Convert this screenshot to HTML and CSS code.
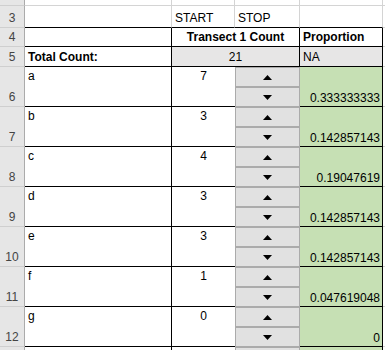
FILE: index.html
```html
<!DOCTYPE html>
<html lang="en">
<head>
    <meta charset="UTF-8">
    <meta name="viewport" content="width=device-width, initial-scale=1.0">
    <title>Transect Count</title>
    <link rel="stylesheet" href="styles.css">
</head>
<body>

    <div class="sheet">
        <!-- row 2 (cut at the top) -->
        <div class="cell rh">2</div>
        <div class="cell"></div>
        <div class="cell"></div>
        <div class="cell"></div>
        <div class="cell"></div>
        <div class="cell"></div>

        <!-- row 3 -->
        <div class="cell rh">3</div>
        <div class="cell line-b"></div>
        <div class="cell line-b">START</div>
        <div class="cell line-b">STOP</div>
        <div class="cell line-b"></div>
        <div class="cell"></div>

        <!-- row 4 -->
        <div class="cell rh">4</div>
        <div class="cell box"></div>
        <div class="cell box bold center span2">Transect 1 Count</div>
        <div class="cell box bold">Proportion</div>
        <div class="cell"></div>

        <!-- row 5 -->
        <div class="cell rh">5</div>
        <div class="cell box bold">Total Count:</div>
        <div class="cell box grey center span2">21</div>
        <div class="cell box grey">NA</div>
        <div class="cell"></div>

        <!-- species rows -->
        <div class="cell rh">6</div>
        <div class="cell box top">a</div>
        <div class="cell box count">7</div>
        <div class="cell spin"><div class="spin-btn"><svg width="9" height="5"><polygon points="0,5 4.5,0 9,5"/></svg></div><div class="spin-btn"><svg width="9" height="5"><polygon points="0,0 9,0 4.5,5"/></svg></div></div>
        <div class="cell box prop">0.333333333</div>
        <div class="cell"></div>

        <div class="cell rh">7</div>
        <div class="cell box top">b</div>
        <div class="cell box count">3</div>
        <div class="cell spin"><div class="spin-btn"><svg width="9" height="5"><polygon points="0,5 4.5,0 9,5"/></svg></div><div class="spin-btn"><svg width="9" height="5"><polygon points="0,0 9,0 4.5,5"/></svg></div></div>
        <div class="cell box prop">0.142857143</div>
        <div class="cell"></div>

        <div class="cell rh">8</div>
        <div class="cell box top">c</div>
        <div class="cell box count">4</div>
        <div class="cell spin"><div class="spin-btn"><svg width="9" height="5"><polygon points="0,5 4.5,0 9,5"/></svg></div><div class="spin-btn"><svg width="9" height="5"><polygon points="0,0 9,0 4.5,5"/></svg></div></div>
        <div class="cell box prop">0.19047619</div>
        <div class="cell"></div>

        <div class="cell rh">9</div>
        <div class="cell box top">d</div>
        <div class="cell box count">3</div>
        <div class="cell spin"><div class="spin-btn"><svg width="9" height="5"><polygon points="0,5 4.5,0 9,5"/></svg></div><div class="spin-btn"><svg width="9" height="5"><polygon points="0,0 9,0 4.5,5"/></svg></div></div>
        <div class="cell box prop">0.142857143</div>
        <div class="cell"></div>

        <div class="cell rh">10</div>
        <div class="cell box top">e</div>
        <div class="cell box count">3</div>
        <div class="cell spin"><div class="spin-btn"><svg width="9" height="5"><polygon points="0,5 4.5,0 9,5"/></svg></div><div class="spin-btn"><svg width="9" height="5"><polygon points="0,0 9,0 4.5,5"/></svg></div></div>
        <div class="cell box prop">0.142857143</div>
        <div class="cell"></div>

        <div class="cell rh">11</div>
        <div class="cell box top">f</div>
        <div class="cell box count">1</div>
        <div class="cell spin"><div class="spin-btn"><svg width="9" height="5"><polygon points="0,5 4.5,0 9,5"/></svg></div><div class="spin-btn"><svg width="9" height="5"><polygon points="0,0 9,0 4.5,5"/></svg></div></div>
        <div class="cell box prop">0.047619048</div>
        <div class="cell"></div>

        <div class="cell rh">12</div>
        <div class="cell box top">g</div>
        <div class="cell box count">0</div>
        <div class="cell spin"><div class="spin-btn"><svg width="9" height="5"><polygon points="0,5 4.5,0 9,5"/></svg></div><div class="spin-btn"><svg width="9" height="5"><polygon points="0,0 9,0 4.5,5"/></svg></div></div>
        <div class="cell box prop">0</div>
        <div class="cell"></div>

        <!-- row 13, only its top edge shows -->
        <div class="cell rh"></div>
        <div class="cell box top"></div>
        <div class="cell box count"></div>
        <div class="cell spin"><div class="spin-btn"></div></div>
        <div class="cell box prop"></div>
        <div class="cell"></div>
    </div>

</body>
</html>
```

FILE: styles.css
```css
body {
    margin: 0;
    background-color: #ffffff;
    font-family: "Liberation Sans", Arial, sans-serif;
    font-size: 12px;
    color: #000000;
    overflow: hidden;
}
.sheet {
    display: grid;
    grid-template-columns: 25px 147px 63px 65px 83px 1fr;
    grid-template-rows: 20px 22px 19px 20px repeat(8, 40px);
    margin-top: -14px;
}
.cell {
    box-sizing: border-box;
    border-right: 1px solid #d4d4d4;
    border-bottom: 1px solid #d4d4d4;
    padding: 0 3px 1px 3px;
    display: flex;
    align-items: flex-end;
    line-height: 15px;
    white-space: nowrap;
    overflow: hidden;
}
.rh {
    background-color: #e6e6e6;
    border-right-color: #ababab;
    border-bottom-color: #cfcfcf;
    color: #444444;
    justify-content: center;
    padding: 0 0 1px 0;
}
.line-b {
    border-bottom-color: #000000;
}
.box {
    border-right-color: #000000;
    border-bottom-color: #000000;
}
.span2 {
    grid-column: span 2;
}
.bold {
    font-weight: bold;
}
.center {
    justify-content: center;
}
.grey {
    background-color: #e7e6e6;
}
.top {
    align-items: flex-start;
    padding-top: 2px;
}
.count {
    border-right: none;
    align-items: flex-start;
    justify-content: center;
    padding-top: 2px;
}
.prop {
    background-color: #c6e0b4;
    justify-content: flex-end;
    padding: 0 2px 0 0;
}
.spin {
    border: none;
    padding: 0;
    display: flex;
    flex-direction: column;
    align-items: stretch;
}
.spin-btn {
    box-sizing: border-box;
    height: 20px;
    background-color: #e1e1e1;
    border: 1px solid #ababab;
    display: flex;
    align-items: center;
    justify-content: center;
}
.spin-btn svg {
    display: block;
    fill: #000000;
}
```
